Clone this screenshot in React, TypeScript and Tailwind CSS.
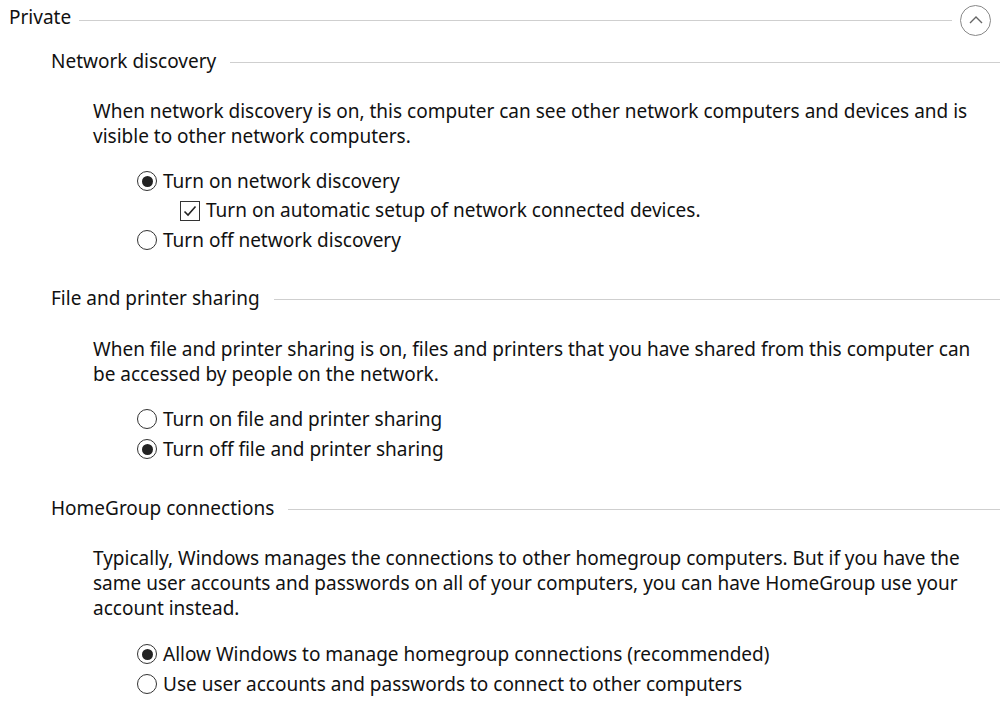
import React from 'react';

const font = { fontFamily: '"Noto Sans", "Open Sans", sans-serif' };

function Radio({ checked, label }: { checked?: boolean; label: string }) {
  return (
    <div className="flex items-center h-[30px]">
      <span className="w-[20px] h-[20px] ml-[1px] rounded-full border-[1.5px] border-[#333] flex items-center justify-center mr-[6px] shrink-0">
        {checked && <span className="w-[11px] h-[11px] rounded-full bg-[#222]" />}
      </span>
      <span>{label}</span>
    </div>
  );
}

function Check({ label }: { label: string }) {
  return (
    <div className="flex items-center h-[29px] pl-[44px]">
      <span className="w-[20px] h-[20px] border-[1.5px] border-[#333] flex items-center justify-center mr-[6px] shrink-0">
        <svg width="16" height="16" viewBox="0 0 16 16" fill="none">
          <path d="M2.5 8.5 L6 12 L13.5 3.5" stroke="#222" strokeWidth="1.6" />
        </svg>
      </span>
      <span>{label}</span>
    </div>
  );
}

function Heading({ title }: { title: string }) {
  return (
    <div className="flex items-center gap-[14px] h-[30px]">
      <span className="whitespace-nowrap">{title}</span>
      <div className="flex-1 h-px bg-[#cfcfcf] mt-[2px]" />
    </div>
  );
}

export default function App() {
  return (
    <div className="w-[1000px] h-[716px] bg-white text-[#111] text-[19px] overflow-hidden" style={font}>
      {/* Private header */}
      <div className="flex items-center pl-[9px] pr-[9px] h-[34px]">
        <span>Private</span>
        <div className="flex-1 h-px bg-[#cfcfcf] ml-[8px] mr-[8px] mt-[6px]" />
        <span className="w-[31px] h-[31px] mt-[6px] rounded-full border border-[#888] flex items-center justify-center">
          <svg width="16" height="10" viewBox="0 0 16 10" fill="none">
            <path d="M2 8 L8 2 L14 8" stroke="#666" strokeWidth="1.4" />
          </svg>
        </span>
      </div>

      <div className="pl-[51px]">
        <div className="mt-[12px]"><Heading title="Network discovery" /></div>
        <div className="pl-[42px] w-[940px] mt-[23px] leading-[25px]">
          When network discovery is on, this computer can see other network computers and devices and is visible to other network computers.
        </div>
        <div className="pl-[85px] mt-[17px]">
          <Radio checked label="Turn on network discovery" />
          <Check label="Turn on automatic setup of network connected devices." />
          <Radio label="Turn off network discovery" />
        </div>

        <div className="mt-[28px]"><Heading title="File and printer sharing" /></div>
        <div className="pl-[42px] w-[940px] mt-[24px] leading-[25px]">
          When file and printer sharing is on, files and printers that you have shared from this computer can be accessed by people on the network.
        </div>
        <div className="pl-[85px] mt-[17px]">
          <Radio label="Turn on file and printer sharing" />
          <Radio checked label="Turn off file and printer sharing" />
        </div>

        <div className="mt-[29px]"><Heading title="HomeGroup connections" /></div>
        <div className="pl-[42px] w-[940px] mt-[23px] leading-[25px]">
          Typically, Windows manages the connections to other homegroup computers. But if you have the same user accounts and passwords on all of your computers, you can have HomeGroup use your account instead.
        </div>
        <div className="pl-[85px] mt-[18px]">
          <Radio checked label="Allow Windows to manage homegroup connections (recommended)" />
          <Radio label="Use user accounts and passwords to connect to other computers" />
        </div>
      </div>
    </div>
  );
}
